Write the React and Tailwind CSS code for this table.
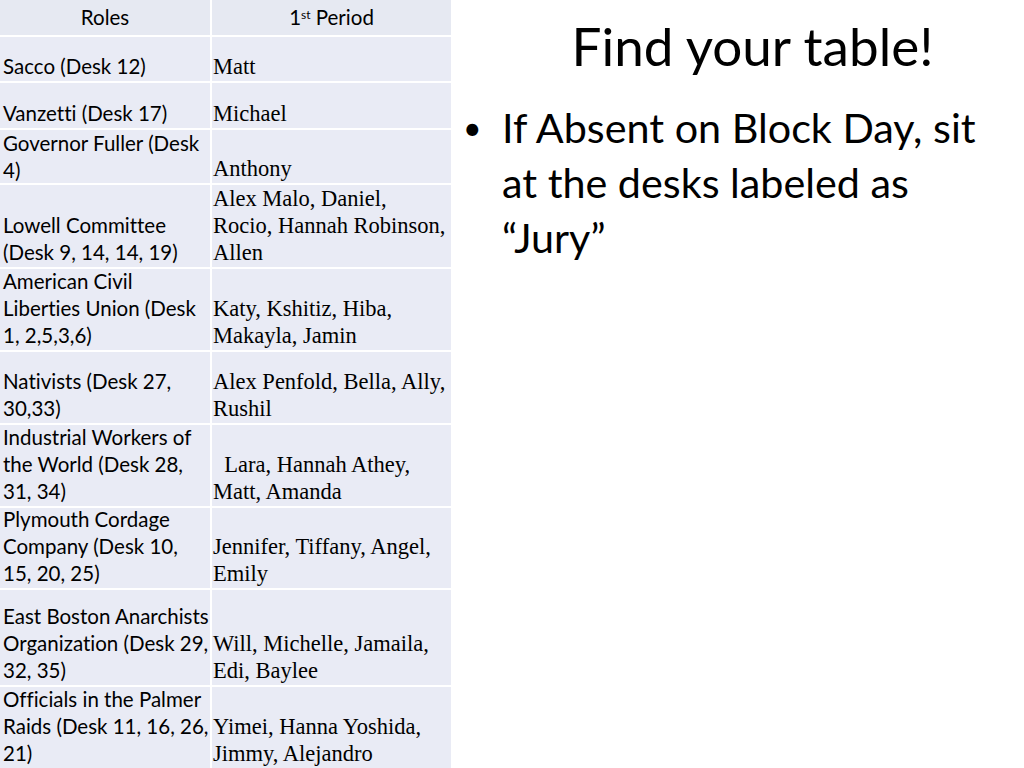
import React from 'react'

const rows = [
  { h: 'h-[44px]', role: ['Sacco (Desk 12)'], names: ['Matt'] },
  { h: 'h-[45px]', role: ['Vanzetti (Desk 17)'], names: ['Michael'] },
  { h: 'h-[53px]', role: ['Governor Fuller (Desk', '4)'], names: ['Anthony'], roleTop: true },
  { h: 'h-[82px]', role: ['Lowell Committee', '(Desk 9, 14, 14, 19)'], names: ['Alex Malo, Daniel,', 'Rocio, Hannah Robinson,', 'Allen'] },
  { h: 'h-[81px]', role: ['American Civil', 'Liberties Union (Desk', '1, 2,5,3,6)'], names: ['Katy, Kshitiz, Hiba,', 'Makayla, Jamin'] },
  { h: 'h-[71px]', role: ['Nativists (Desk 27,', '30,33)'], names: ['Alex Penfold, Bella, Ally,', 'Rushil'] },
  { h: 'h-[81px]', role: ['Industrial Workers of', 'the World (Desk 28,', '31, 34)'], names: ['\u00a0\u00a0Lara, Hannah Athey,', 'Matt, Amanda'] },
  { h: 'h-[80px]', role: ['Plymouth Cordage', 'Company (Desk 10,', '15, 20, 25)'], names: ['Jennifer, Tiffany, Angel,', 'Emily'] },
  { h: 'h-[95px]', role: ['East Boston Anarchists', 'Organization (Desk 29,', '32, 35)'], names: ['Will, Michelle, Jamaila,', 'Edi, Baylee'] },
  { h: 'h-[81px]', role: ['Officials in the Palmer', 'Raids (Desk 11, 16, 26,', '21)'], names: ['Yimei, Hanna Yoshida,', 'Jimmy, Alejandro'] },
]

const sans = "font-['Lato',_'Open_Sans',_sans-serif] [font-variant-ligatures:none]"
const serif = "font-['Liberation_Serif',_'Times_New_Roman',_serif]"

export default function App() {
  return (
    <div className="flex w-[1024px] h-[768px] bg-white text-black overflow-hidden">
      <div className="grid grid-cols-[210px_239px] gap-[2px] w-[451px] shrink-0 bg-white">
        <div className={`h-[35px] bg-[#e6e9f2] flex items-center justify-center text-[20.5px] ${sans}`}>Roles</div>
        <div className={`h-[35px] bg-[#e6e9f2] flex items-center justify-center text-[20.5px] ${sans}`}>
          <span>1<sup className="text-[12px]">st</sup> Period</span>
        </div>
        {rows.map((r, i) => (
          <React.Fragment key={i}>
            <div className={`${r.h} bg-[#e9ebf5] flex flex-col ${r.roleTop ? 'justify-start' : 'justify-end'} pl-[3px] pb-[1px] text-[20.5px] leading-[27px] whitespace-nowrap ${sans}`}>
              {r.role.map((l, j) => (
                <div key={j}>{l}</div>
              ))}
            </div>
            <div className={`${r.h} bg-[#e9ebf5] flex flex-col justify-end pl-[1px] pb-[1px] text-[22.5px] leading-[27px] whitespace-nowrap ${serif}`}>
              {r.names.map((l, j) => (
                <div key={j}>{l}</div>
              ))}
            </div>
          </React.Fragment>
        ))}
      </div>
      <div className={`flex-1 flex flex-col ${sans}`}>
        <h1 className="text-center text-[53px] leading-[56px] pt-[18px] pl-[30px]">Find your table!</h1>
        <ul className="mt-[26px] pl-[12px] text-[41.3px] leading-[55px]">
          <li className="flex">
            <span className="w-[39px] shrink-0 text-[32px]">•</span>
            <span className="w-[492px]">If Absent on Block Day, sit at the desks labeled as “Jury”</span>
          </li>
        </ul>
      </div>
    </div>
  )
}
